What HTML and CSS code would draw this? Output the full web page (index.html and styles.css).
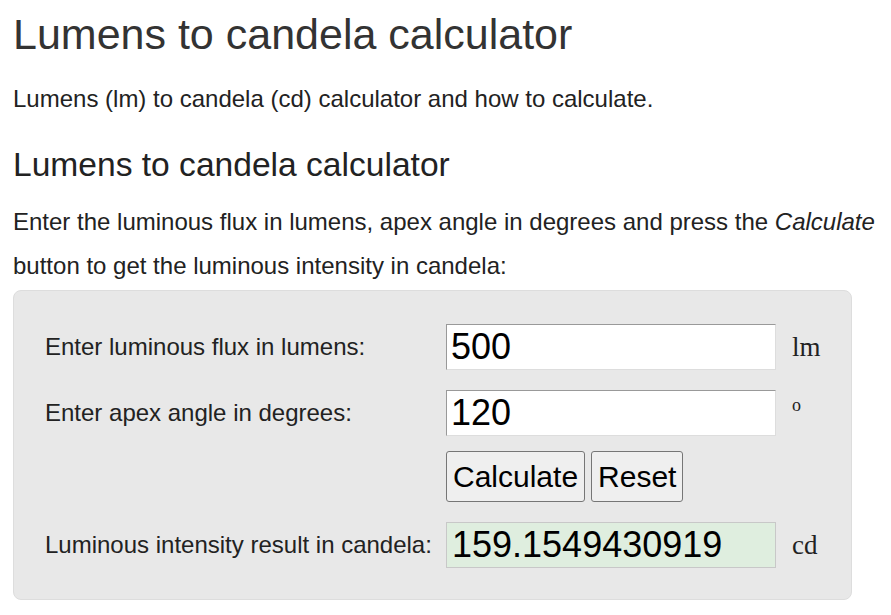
FILE: index.html
```html
<!DOCTYPE html>
<html lang="en">
<head>
<meta charset="utf-8">
<title>Lumens to candela calculator</title>
<link rel="stylesheet" href="styles.css">
</head>
<body>
<main class="page">
  <h1 class="title">Lumens to candela calculator</h1>
  <p class="intro">Lumens (lm) to candela (cd) calculator and how to calculate.</p>
  <h2 class="subtitle">Lumens to candela calculator</h2>
  <p class="text">Enter the luminous flux in lumens, apex angle in degrees and press the <i>Calculate</i> button to get the luminous intensity in candela:</p>
  <form class="calc">
    <div class="row">
      <label class="label" for="lm">Enter luminous flux in lumens:</label>
      <input class="field" id="lm" type="text" value="500">
      <span class="unit">lm</span>
    </div>
    <div class="row row-gap">
      <label class="label" for="deg">Enter apex angle in degrees:</label>
      <input class="field" id="deg" type="text" value="120">
      <span class="unit"><span class="deg">o</span></span>
    </div>
    <div class="row row-buttons">
      <span class="label"></span>
      <div class="buttons">
        <button class="btn" type="button">Calculate</button>
        <button class="btn" type="reset">Reset</button>
      </div>
    </div>
    <div class="row row-result">
      <label class="label" for="cd">Luminous intensity result in candela:</label>
      <input class="field result" id="cd" type="text" value="159.1549430919" readonly>
      <span class="unit">cd</span>
    </div>
  </form>
</main>
</body>
</html>
```
FILE: styles.css
```css
html, body {
  margin: 0;
  padding: 0;
  background: #fff;
}
body {
  font-family: "Liberation Sans", Arial, sans-serif;
  color: #222;
}
.page {
  padding: 0 0 0 13px;
  width: 862px;
}
.title {
  font-size: 43px;
  line-height: 50px;
  font-weight: normal;
  color: #333;
  margin: 9px 0 0;
}
.intro {
  font-size: 24px;
  line-height: 44px;
  margin: 18px 0 0;
}
.subtitle {
  font-size: 33.6px;
  line-height: 40px;
  font-weight: normal;
  color: #222;
  margin: 24px 0 0;
}
.text {
  font-size: 24px;
  line-height: 44px;
  margin: 15px 0 0;
}
.calc {
  margin: 2px 0 0;
  width: 839px;
  box-sizing: border-box;
  background: #e8e8e8;
  border: 1px solid #ddd;
  border-radius: 8px;
  padding: 33px 0 31px 31px;
}
.row {
  display: flex;
  align-items: center;
}
.row-gap {
  margin-top: 20px;
}
.row-buttons {
  margin-top: 15px;
}
.row-result {
  margin-top: 20px;
}
.label {
  width: 401px;
  flex: none;
  font-size: 24px;
  color: #222;
}
.field {
  width: 330px;
  height: 46px;
  box-sizing: border-box;
  border: 1px solid #999;
  border-right-color: #ddd;
  border-bottom-color: #ddd;
  background: #fff;
  font-family: "Liberation Sans", Arial, sans-serif;
  font-size: 36px;
  color: #000;
  padding: 0 4px;
  margin: 0;
  outline: none;
}
.result {
  background: #dfeedf;
  border: 1px solid #c8c8c8;
  padding-left: 5px;
}
.unit {
  margin-left: 16px;
  font-family: "Liberation Serif", "Times New Roman", serif;
  font-size: 27px;
  color: #222;
}
.deg {
  font-size: 18px;
  position: relative;
  top: -11px;
}
.buttons {
  display: flex;
  gap: 6px;
}
.btn {
  height: 51px;
  box-sizing: border-box;
  font-family: "Liberation Sans", Arial, sans-serif;
  font-size: 30px;
  color: #000;
  background: #efefef;
  border: 1px solid #767676;
  border-radius: 3px;
  padding: 0 6px;
  margin: 0;
}
```
